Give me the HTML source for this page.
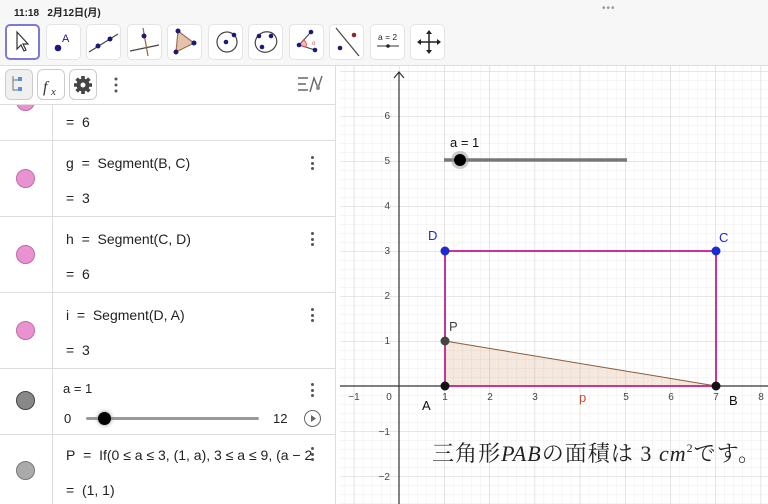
<!DOCTYPE html>
<html><head><meta charset="utf-8">
<style>
*{margin:0;padding:0;box-sizing:border-box}
body{width:768px;height:504px;overflow:hidden;background:#fff;font-family:"Liberation Sans","Noto Sans CJK JP",sans-serif;position:relative}
.abs{position:absolute}
.tb{position:absolute;top:24px;width:35px;height:36px;border:1px solid #e4e4e4;border-radius:5px;background:#fff}
.hb{position:absolute;top:69px;width:28px;height:31px;border:1px solid #ccc;border-radius:6px;background:#fff}
.row{position:absolute;left:0;width:335px;border-bottom:1px solid #ddd}
.dot{position:absolute;left:16px;width:19px;height:19px;border-radius:50%}
.pk{background:#e893cf;border:1.5px solid #c06aa6}
.t{position:absolute;left:66px;font-size:14px;color:#222}
.menu{position:absolute;left:311px;width:3px}
.menu i{display:block;width:3px;height:3px;border-radius:50%;background:#555;margin-bottom:2.5px}
</style></head><body>
<div class="abs" style="left:0;top:0;width:768px;height:66px;background:#f7f7f7"></div>
<div class="abs" style="left:14px;top:4px;font-size:10px;font-weight:bold;color:#222">11:18&nbsp;&nbsp;&nbsp;2月12日(月)</div>
<div class="abs" style="left:602px;top:3px;font-size:10px;color:#999;letter-spacing:1px">•••</div>

<div class="tb" style="left:5px;border:2px solid #7b7bd6"></div>
<div class="tb" style="left:46px"></div>
<div class="tb" style="left:86px"></div>
<div class="tb" style="left:127px"></div>
<div class="tb" style="left:167px"></div>
<div class="tb" style="left:208px"></div>
<div class="tb" style="left:248px"></div>
<div class="tb" style="left:289px"></div>
<div class="tb" style="left:329px"></div>
<div class="tb" style="left:370px"></div>
<div class="tb" style="left:410px"></div>
<svg class="abs" style="left:0;top:20px" width="450" height="45" viewBox="0 20 450 45">
<path d="M17 32 L17 49 L21 45 L24 51 L26 50 L23 44 L28 44 Z" fill="#fff" stroke="#333" stroke-width="1.2"/>
<circle cx="58" cy="48" r="3.3" fill="#1a1a7a"/><text x="62" y="42" font-size="11" fill="#1a1a7a" font-family="Liberation Sans">A</text>
<line x1="89" y1="52" x2="118" y2="34" stroke="#444" stroke-width="1.2"/><circle cx="98" cy="46" r="2.5" fill="#1a1a7a"/><circle cx="110" cy="39" r="2.5" fill="#1a1a7a"/>
<line x1="130" y1="51" x2="159" y2="45" stroke="#444" stroke-width="1.2"/><line x1="143" y1="28" x2="148" y2="56" stroke="#a0603a" stroke-width="1.2"/><circle cx="144" cy="36" r="2.5" fill="#1a1a7a"/>
<path d="M178 31 L194 43 L176 52 Z" fill="#e3c2ae" stroke="#a07050" stroke-width="1.2"/><circle cx="178" cy="31" r="2.5" fill="#1a1a7a"/><circle cx="194" cy="43" r="2.5" fill="#1a1a7a"/><circle cx="176" cy="52" r="2.5" fill="#1a1a7a"/>
<circle cx="227" cy="42" r="10" fill="none" stroke="#444" stroke-width="1.2"/><circle cx="226" cy="42" r="2.3" fill="#1a1a7a"/><circle cx="234" cy="35" r="2.3" fill="#1a1a7a"/>
<ellipse cx="266" cy="42" rx="11" ry="10" fill="none" stroke="#444" stroke-width="1.2" transform="rotate(-30 266 42)"/><circle cx="259" cy="36" r="2.3" fill="#1a1a7a"/><circle cx="271" cy="36" r="2.3" fill="#1a1a7a"/><circle cx="262" cy="47" r="2.3" fill="#1a1a7a"/>
<path d="M311 32 L299 45 L315 50" fill="none" stroke="#444" stroke-width="1.1"/><path d="M304 40 A6 6 0 0 1 306 47 L299 45Z" fill="#f3b8b8" stroke="#d44" stroke-width="0.8"/><text x="312" y="45" font-size="6" fill="#c55">o</text><circle cx="311" cy="32" r="2.3" fill="#1a1a7a"/><circle cx="299" cy="45" r="2.3" fill="#1a1a7a"/><circle cx="315" cy="50" r="2.3" fill="#1a1a7a"/>
<line x1="336" y1="28" x2="359" y2="56" stroke="#444" stroke-width="1.2"/><circle cx="340" cy="48" r="2.3" fill="#1a1a7a"/><circle cx="354" cy="35" r="2.3" fill="#8b2a2a"/>
<text x="378" y="40" font-size="8.5" fill="#222">a = 2</text><line x1="377" y1="46" x2="399" y2="46" stroke="#333"/><circle cx="388" cy="46" r="1.8" fill="#222"/>
<path d="M429 32 V52 M419 42 H439" stroke="#222" stroke-width="1.5"/><path d="M429 30 l-3 4 h6z M429 54 l-3 -4 h6z M417 42 l4 -3 v6z M441 42 l-4 -3 v6z" fill="#222"/>
</svg>

<div class="abs" style="left:0;top:66px;width:336px;height:438px;background:#fff;border-right:1px solid #ddd"></div>
<div class="abs" style="left:0;top:65px;width:768px;height:1px;background:#ddd"></div>
<div class="abs" style="left:0;top:105px;width:52px;height:10px;overflow:hidden"><div class="dot pk" style="top:-13px"></div></div>
<div class="hb" style="left:5px;background:#f0f0f0"></div>
<div class="hb" style="left:37px"></div>
<div class="hb" style="left:69px"></div>
<svg class="abs" style="left:0;top:66px" width="340" height="40">
<path d="M13 10 V24 H18 M13 14 H18" stroke="#888" fill="none" stroke-width="1.2"/><rect x="18" y="11" width="4" height="4" fill="#5b8fd8"/><rect x="18" y="21" width="4" height="4" fill="#5b8fd8"/>
<text x="43" y="26" font-size="16" font-style="italic" fill="#333" font-family="Liberation Serif">f</text><text x="51" y="29" font-size="11" font-style="italic" fill="#333" font-family="Liberation Serif">x</text>
<g transform="translate(83 19)"><circle r="6.5" fill="#444"/><circle r="2.5" fill="#fff"/><path d="M-1.8 -9 h3.6 v3 h-3.6z M-1.8 6 h3.6 v3 h-3.6z M-9 -1.8 v3.6 h3 v-3.6z M6 -1.8 v3.6 h3 v-3.6z" fill="#444"/><path d="M-1.8 -9 h3.6 v3 h-3.6z M-1.8 6 h3.6 v3 h-3.6z" fill="#444" transform="rotate(45)"/><path d="M-1.8 -9 h3.6 v3 h-3.6z M-1.8 6 h3.6 v3 h-3.6z" fill="#444" transform="rotate(-45)"/></g>
<circle cx="116" cy="13" r="1.5" fill="#555"/><circle cx="116" cy="19" r="1.5" fill="#555"/><circle cx="116" cy="25" r="1.5" fill="#555"/>
<path d="M298 12 H308 M298 18 H306 M298 24 H308 M310 26 L314 12 L318 22 L322 10" stroke="#666" fill="none" stroke-width="1.4"/><circle cx="318" cy="22" r="2" fill="#889"/>
</svg>
<div class="abs" style="left:0;top:104px;width:335px;height:1px;background:#ddd"></div>
<div class="abs" style="left:52px;top:105px;width:1px;height:399px;background:#ddd"></div>

<div class="row" style="top:105px;height:36px"></div>
<div class="t" style="top:114px">=&nbsp; 6</div>

<div class="row" style="top:141px;height:76px"></div>
<div class="dot pk" style="top:169px"></div>
<div class="t" style="top:155px">g&nbsp; = &nbsp;Segment(B, C)</div>
<div class="t" style="top:190px">=&nbsp; 3</div>
<div class="menu" style="top:156px"><i></i><i></i><i></i></div>

<div class="row" style="top:217px;height:76px"></div>
<div class="dot pk" style="top:245px"></div>
<div class="t" style="top:231px">h&nbsp; = &nbsp;Segment(C, D)</div>
<div class="t" style="top:266px">=&nbsp; 6</div>
<div class="menu" style="top:232px"><i></i><i></i><i></i></div>

<div class="row" style="top:293px;height:76px"></div>
<div class="dot pk" style="top:321px"></div>
<div class="t" style="top:307px">i&nbsp; = &nbsp;Segment(D, A)</div>
<div class="t" style="top:342px">=&nbsp; 3</div>
<div class="menu" style="top:308px"><i></i><i></i><i></i></div>

<div class="row" style="top:369px;height:66px"></div>
<div class="dot" style="top:391px;background:#888;border:1.5px solid #444"></div>
<div class="t" style="top:381px;left:63px;font-size:13px">a = 1</div>
<div class="menu" style="top:383px"><i></i><i></i><i></i></div>
<div class="t" style="top:411px;left:64px;font-size:13px">0</div>
<div class="abs" style="left:86px;top:417px;width:173px;height:3px;background:#999;border-radius:2px"></div>
<div class="abs" style="left:98px;top:412px;width:13px;height:13px;border-radius:50%;background:#000;box-shadow:0 0 4px #888"></div>
<div class="t" style="top:411px;left:273px;font-size:13px">12</div>
<div class="abs" style="left:304px;top:410px;width:17px;height:17px;border-radius:50%;border:1.5px solid #666"></div>
<svg class="abs" style="left:304px;top:410px" width="17" height="17"><path d="M7 5 L12 8.5 L7 12Z" fill="#666"/></svg>

<div class="dot" style="top:461px;background:#aaa;border:1.5px solid #777"></div>
<div class="t" style="top:447px;white-space:nowrap;width:268px;overflow:hidden">P&nbsp; = &nbsp;If(0 ≤ a ≤ 3, (1, a), 3 ≤ a ≤ 9, (a − 2</div>
<div class="menu" style="top:447px"><i></i><i></i><i></i></div>
<div class="t" style="top:482px">=&nbsp; (1, 1)</div>

<svg class="abs" style="left:340px;top:66px" width="428" height="438" viewBox="340 66 428 438">
<defs>
<pattern id="mn" patternUnits="userSpaceOnUse" x="399" y="386" width="9.04" height="9">
<path d="M0 0 H9.04 M0 0 V9" stroke="#ececec" stroke-width="1" fill="none"/></pattern>
<pattern id="mj" patternUnits="userSpaceOnUse" x="399" y="386" width="45.2" height="45">
<path d="M0 0 H45.2 M0 0 V45" stroke="#cfcfcf" stroke-width="1" fill="none"/></pattern>
</defs>
<rect x="340" y="66" width="428" height="438" fill="#fff"/>
<rect x="340" y="66" width="428" height="438" fill="url(#mn)"/>
<rect x="340" y="66" width="428" height="438" fill="url(#mj)"/>
<line x1="399" y1="504" x2="399" y2="72" stroke="#333" stroke-width="1.2"/>
<path d="M394 78 L399 72 L404 78" fill="none" stroke="#333" stroke-width="1.2"/>
<line x1="340" y1="386" x2="768" y2="386" stroke="#333" stroke-width="1.2"/>
<g font-size="10" fill="#444" font-family="Liberation Sans">
<text x="390" y="119" text-anchor="end">6</text><text x="390" y="164" text-anchor="end">5</text><text x="390" y="209" text-anchor="end">4</text>
<text x="390" y="254" text-anchor="end">3</text><text x="390" y="299" text-anchor="end">2</text><text x="390" y="344" text-anchor="end">1</text>
<text x="390" y="435" text-anchor="end">−1</text><text x="390" y="480" text-anchor="end">−2</text>
<text x="354" y="400" text-anchor="middle">−1</text><text x="389" y="400" text-anchor="middle">0</text>
<text x="445" y="400" text-anchor="middle">1</text><text x="490" y="400" text-anchor="middle">2</text><text x="535" y="400" text-anchor="middle">3</text>
<text x="626" y="400" text-anchor="middle">5</text><text x="671" y="400" text-anchor="middle">6</text><text x="716" y="400" text-anchor="middle">7</text><text x="761" y="400" text-anchor="middle">8</text>
</g>
<line x1="444" y1="160" x2="627" y2="160" stroke="#777" stroke-width="3.5"/>
<circle cx="460" cy="160" r="9" fill="#999" opacity="0.5"/><circle cx="460" cy="160" r="6" fill="#000"/>
<text x="450" y="147" font-size="13" fill="#111">a = 1</text>
<path d="M445 341 L716 386 L445 386 Z" fill="#c98a5e" fill-opacity="0.2" stroke="#8b5a3c" stroke-width="1"/>
<rect x="445" y="251" width="271" height="135" fill="none" stroke="#cc3399" stroke-width="2"/>
<circle cx="445" cy="251" r="4.5" fill="#1a2ad6"/><circle cx="716" cy="251" r="4.5" fill="#1a2ad6"/>
<circle cx="445" cy="386" r="4.5" fill="#111"/><circle cx="716" cy="386" r="4.5" fill="#111"/>
<circle cx="445" cy="341" r="4.5" fill="#444"/>
<g font-size="13" font-family="Liberation Sans">
<text x="428" y="240" fill="#1a2ad6">D</text><text x="719" y="242" fill="#1a2ad6">C</text>
<text x="449" y="331" fill="#444">P</text><text x="422" y="410" fill="#111">A</text><text x="729" y="405" fill="#111">B</text>
<text x="579" y="402" fill="#c0502a">p</text>
</g>
<text x="432" y="461" font-size="22" fill="#222" font-family="Liberation Serif, Noto Serif CJK SC, serif" textLength="328" lengthAdjust="spacing">三角形<tspan font-style="italic">PAB</tspan>の面積は 3 <tspan font-style="italic">cm</tspan><tspan font-size="12" dy="-9">2</tspan><tspan dy="9">です。</tspan></text>
</svg>
</body></html>
